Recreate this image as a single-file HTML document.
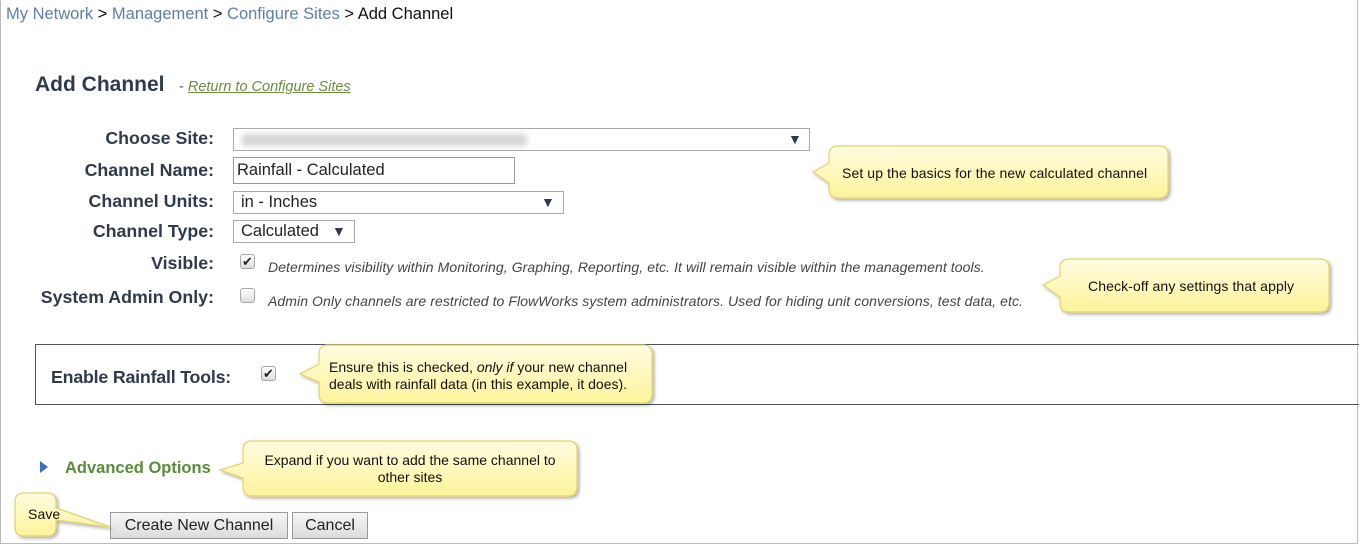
<!DOCTYPE html>
<html><head><style>
*{margin:0;padding:0;box-sizing:border-box}
body{width:1359px;height:544px;position:relative;background:#fff;font-family:"Liberation Sans",Arial,sans-serif;overflow:hidden;color:#222}
.a{position:absolute;white-space:nowrap}
.frame{position:absolute;left:0;top:0;width:1358px;height:544px;border-left:1px solid #bbb;border-right:1px solid #bbb;border-bottom:1px solid #bbb}
.crumb{font-size:16.5px;color:#111}
.crumb span{color:#5f7fa8}
.lbl{font-size:17.8px;font-weight:bold;color:#2f3b4b;text-align:right;width:210px;left:4px;letter-spacing:0px}
.box{position:absolute;border:1px solid #a9a9a9;background:#fff;font-size:16.5px;padding-left:7px;color:#222}
.arr{position:absolute;font-size:14px;color:#2f3b4b}
.cb{position:absolute;width:15px;height:15px;border:1px solid #a8a8a8;border-radius:3px;background:linear-gradient(#fff,#ddd);font-size:13px;line-height:13px;text-align:center;color:#222}
.desc{font-size:14px;font-style:italic;color:#444;letter-spacing:0.08px}
.ct{font-size:14px;color:#111;text-align:center;letter-spacing:0.1px}
.btn{position:absolute;border:1px solid #999;background:linear-gradient(#f6f6f6,#dcdcdc);font-size:16px;color:#222;text-align:center;line-height:25px;height:27px}
</style></head><body>
<div class="frame"></div>
<div class="a crumb" style="left:6px;top:5px"><span>My Network</span> &gt; <span>Management</span> &gt; <span>Configure Sites</span> &gt; Add Channel</div>
<div class="a" style="left:35px;top:73px;font-size:21px;font-weight:bold;color:#2f3b4b">Add Channel</div>
<div class="a" style="left:179px;top:79px;font-size:14.5px;color:#555">- <i style="color:#6a8d3c;text-decoration:underline">Return to Configure Sites</i></div>

<div class="a lbl" style="top:128px">Choose Site:</div>
<div class="a lbl" style="top:160px">Channel Name:</div>
<div class="a lbl" style="top:191px">Channel Units:</div>
<div class="a lbl" style="top:221px">Channel Type:</div>
<div class="a lbl" style="top:253px">Visible:</div>
<div class="a lbl" style="top:287px">System Admin Only:</div>

<div class="box" style="left:233px;top:128px;width:577px;height:23px"><div style="position:absolute;left:8px;top:5px;width:285px;height:12px;background:#d6d6d6;filter:blur(3px)"></div></div>
<div class="arr" style="left:788px;top:131px">▼</div>
<div class="box" style="left:233px;top:157px;width:282px;height:27px;border-color:#999;padding-left:3px;line-height:25px">Rainfall - Calculated</div>
<div class="box" style="left:233px;top:191px;width:331px;height:23px;line-height:21px">in - Inches</div>
<div class="arr" style="left:541px;top:194px">▼</div>
<div class="box" style="left:233px;top:220px;width:122px;height:23px;line-height:21px">Calculated</div>
<div class="arr" style="left:332px;top:223px">▼</div>

<div class="cb" style="left:240px;top:254px">✔</div>
<div class="a desc" style="left:268px;top:259px">Determines visibility within Monitoring, Graphing, Reporting, etc. It will remain visible within the management tools.</div>
<div class="cb" style="left:240px;top:288px"></div>
<div class="a desc" style="left:268px;top:293px">Admin Only channels are restricted to FlowWorks system administrators. Used for hiding unit conversions, test data, etc.</div>

<div style="position:absolute;left:35px;top:344px;width:1330px;height:61px;border:1px solid #4a5560"></div>
<div class="a" style="left:51px;top:367px;font-size:17.8px;font-weight:bold;color:#2f3b4b;letter-spacing:-0.2px">Enable Rainfall Tools:</div>
<div class="cb" style="left:261px;top:366px">✔</div>

<div class="a" style="left:40px;top:461px;width:0;height:0;border-left:8px solid #3a6fc4;border-top:6px solid transparent;border-bottom:6px solid transparent"></div>
<div class="a" style="left:65px;top:459px;font-size:16.5px;font-weight:bold;color:#5c8a3a">Advanced Options</div>

<div class="btn" style="left:110px;top:512px;width:178px">Create New Channel</div>
<div class="btn" style="left:292px;top:512px;width:76px">Cancel</div>

<svg class="a" style="left:0;top:0" width="1359" height="544">
<defs>
<linearGradient id="g" x1="0" y1="0" x2="0" y2="1"><stop offset="0" stop-color="#fffce0"/><stop offset="1" stop-color="#fdf39a"/></linearGradient>
<filter id="s"><feDropShadow dx="2" dy="2" stdDeviation="1.5" flood-color="#000" flood-opacity="0.3"/></filter>
</defs>
<g fill="url(#g)" stroke="#e6d26a" stroke-width="1.2" filter="url(#s)">
<path d="M838 146 H1159 Q1168 146 1168 155 V189 Q1168 198 1159 198 H838 Q829 198 829 189 V183 L813 172 L829 163 V155 Q829 146 838 146Z"/>
<path d="M1069 259 H1320 Q1329 259 1329 268 V303 Q1329 312 1320 312 H1069 Q1060 312 1060 303 V297 L1043 285 L1060 276 V268 Q1060 259 1069 259Z"/>
<path d="M328 345 H643 Q652 345 652 354 V394 Q652 403 643 403 H328 Q319 403 319 394 V382 L300 374 L319 364 V354 Q319 345 328 345Z"/>
<path d="M252 441 H568 Q577 441 577 450 V487 Q577 496 568 496 H252 Q243 496 243 487 V478 L220 470 L243 463 V450 Q243 441 252 441Z"/>
<path d="M24 493 H47 Q56 493 56 502 V508 L110 527 L56 520 V527 Q56 536 47 536 H24 Q15 536 15 527 V502 Q15 493 24 493Z"/>
</g>
</svg>
<div class="a ct" style="left:842px;top:165px">Set up the basics for the new calculated channel</div>
<div class="a ct" style="left:1088px;top:278px">Check-off any settings that apply</div>
<div class="a ct" style="left:329px;top:359px;text-align:left;line-height:17px;letter-spacing:0">Ensure this is checked, <i>only if</i> your new channel<br>deals with rainfall data (in this example, it does).</div>
<div class="a ct" style="left:250px;top:452px;width:320px;line-height:17px;white-space:normal;letter-spacing:0">Expand if you want to add the same channel to other sites</div>
<div class="a ct" style="left:28px;top:506px">Save</div>
</body></html>
